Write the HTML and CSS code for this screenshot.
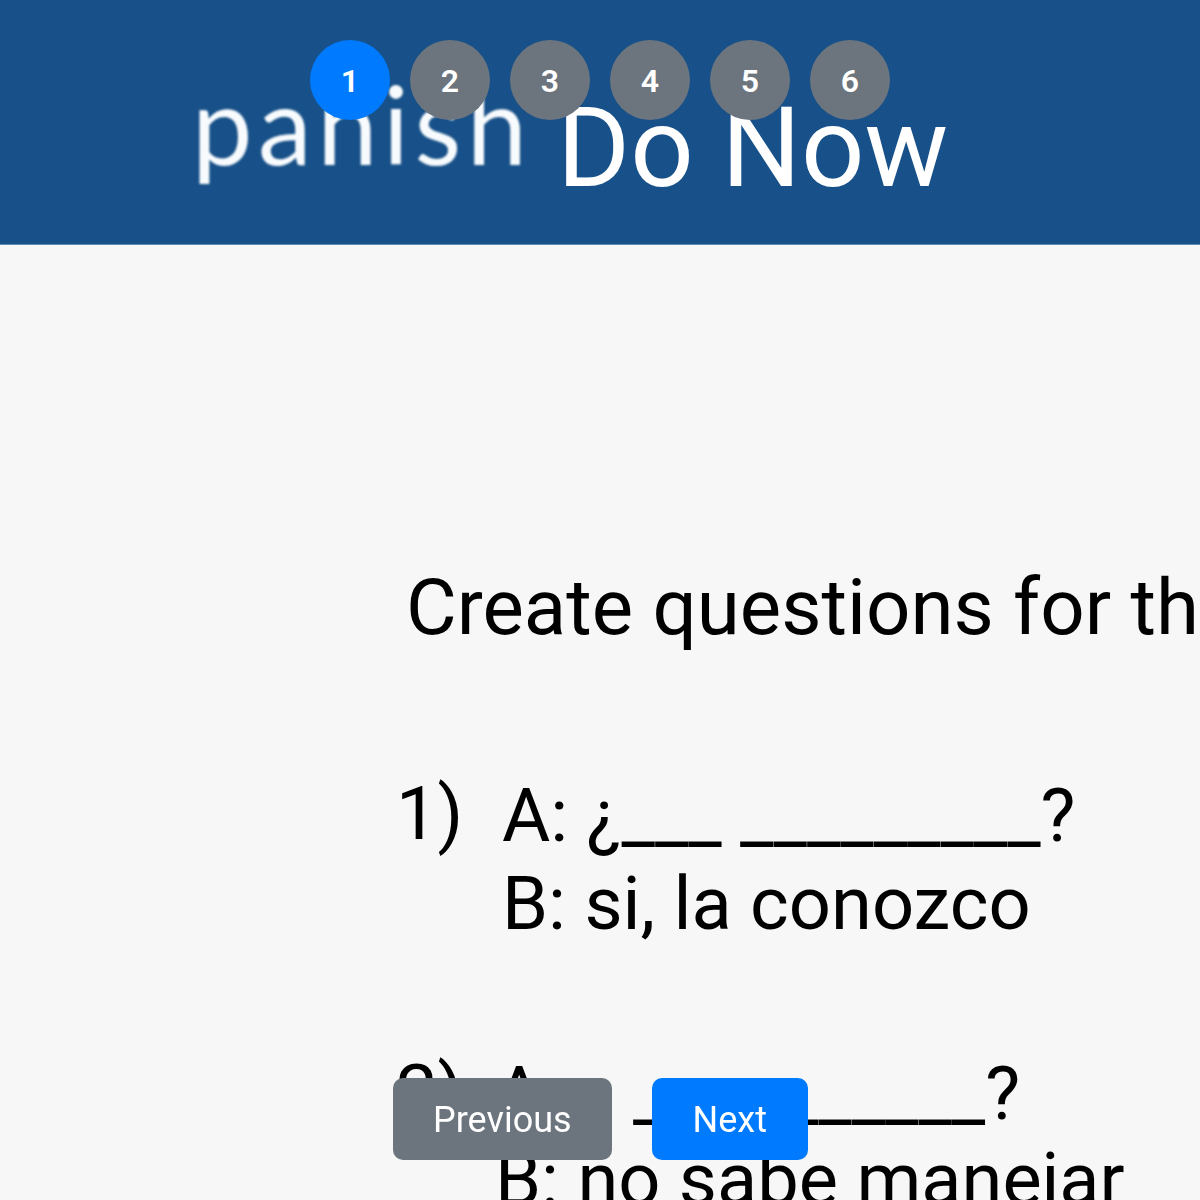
FILE: index.html
```html
<!DOCTYPE html>
<html lang="en">
<head>
  <meta charset="UTF-8">
  <meta name="viewport" content="width=device-width, initial-scale=1.0">
  <title>Do Now</title>
  <link rel="stylesheet" href="styles.css">
</head>
<body>

  <div class="steps">
    <div class="step active">1</div>
    <div class="step">2</div>
    <div class="step">3</div>
    <div class="step">4</div>
    <div class="step">5</div>
    <div class="step">6</div>
  </div>

  <header class="banner">
    <span class="logo-text">panish</span>
    <h1>Do Now</h1>
  </header>

  <!-- Worksheet -->
  <main class="sheet">
    <p class="prompt">Create questions for the answers</p>

    <div class="question">
      <span class="num">1)</span>
      <div class="lines">
        <p>A: ¿___ _________?</p>
        <p>B: si, la conozco</p>
      </div>
    </div>

    <div class="question second">
      <span class="num">2)</span>
      <div class="lines">
        <p>A: ¿ _ _________?</p>
        <p>B: no sabe manejar</p>
      </div>
    </div>
  </main>

  <div class="actions">
    <button class="btn btn-prev">Previous</button>
    <button class="btn btn-next">Next</button>
  </div>

</body>
</html>
```

FILE: styles.css
```css
html, body {
  height: 100%;
  overflow: hidden;
}

body {
  font-family: Roboto, sans-serif;
  background: #f7f7f7;
  margin: 0;
  color: #000;
}

p {
  margin: 0;
}

.banner {
  display: flex;
  align-items: flex-start;
  height: 245px;
  box-sizing: border-box;
  padding-left: 192px;
  background: #185189;
  border-bottom: 1px solid #5f8db0;
  color: #fff;
}

.logo-text {
  font-family: Lato, sans-serif;
  font-size: 108px;
  line-height: 1;
  margin-top: 69px;
  width: 365px;
  letter-spacing: 5.5px;
  color: #f8fbfd;
  filter: blur(0.8px);
}

.banner h1 {
  margin: 87px 0 0 0;
  font-size: 111.5px;
  font-weight: 400;
  line-height: 1.1;
}

.steps {
  position: absolute;
  top: 40px;
  left: 310px;
  z-index: 2;
  display: flex;
  gap: 20px;
}

.step {
  width: 80px;
  height: 80px;
  box-sizing: border-box;
  padding-top: 1px;
  border-radius: 50%;
  background: #6c757d;
  color: #fff;
  font-size: 32px;
  font-weight: 600;
  display: flex;
  align-items: center;
  justify-content: center;
}

.step.active {
  background: #007bff;
}

.sheet {
  padding: 320px 0 0 396px;
  white-space: nowrap;
  font-size: 74px;
  line-height: 86px;
}

.prompt {
  margin-left: 10px;
  margin-bottom: 122px;
  font-size: 78px;
}

.question {
  display: flex;
}

.lines p + p {
  margin-top: 2px;
}

.second {
  margin-top: 104px;
}

.second .lines {
  margin-left: -7px;
}

.second .lines p + p {
  margin-top: 0;
}

.num {
  width: 106px;
  margin-top: -2px;
}

.actions {
  position: fixed;
  top: 1078px;
  left: 393px;
  z-index: 2;
  display: flex;
  gap: 40px;
}

.btn {
  height: 82px;
  padding: 2px 40px 0;
  font-family: Roboto, sans-serif;
  font-size: 36px;
  color: #fff;
  border: none;
  border-radius: 10px;
}

.btn-prev {
  background: #6c757d;
}

.btn-next {
  background: #007bff;
  padding: 2px 41px 0;
}
```
